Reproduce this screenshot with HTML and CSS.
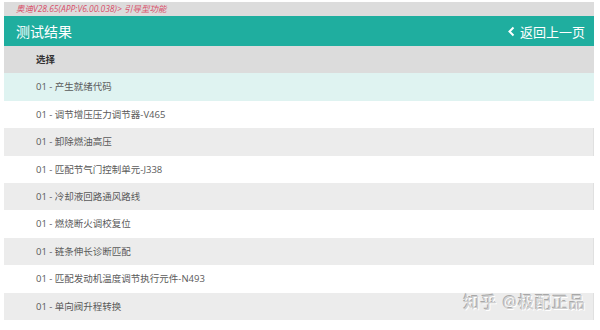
FILE: index.html
```html
<!DOCTYPE html>
<html>
<head>
	<meta charset="utf-8">
	<title>测试结果</title>
	<link rel="stylesheet" href="styles.css">
</head>
<body>
	<main class="pantalla">
		<div class="ruta">奥迪V28.65(APP:V6.00.038)&gt; 引导型功能</div>
		<header class="barra">
			<span class="titulo">测试结果</span>
			<a class="volver" href="#">
				<svg width="9" height="11" viewBox="0 0 9 11"><path d="M6.5 1.5 L2.5 5.5 L6.5 9.5" fill="none" stroke="#fff" stroke-width="2"/></svg>
				返回上一页
			</a>
		</header>
		<div class="fila cabecera">选择</div>
		<div class="fila activa">01 - 产生就绪代码</div>
		<div class="fila blanca">01 - 调节增压压力调节器-V465</div>
		<div class="fila gris">01 - 卸除燃油高压</div>
		<div class="fila blanca">01 - 匹配节气门控制单元-J338</div>
		<div class="fila gris">01 - 冷却液回路通风路线</div>
		<div class="fila blanca">01 - 燃烧断火调校复位</div>
		<div class="fila gris">01 - 链条伸长诊断匹配</div>
		<div class="fila blanca">01 - 匹配发动机温度调节执行元件-N493</div>
		<div class="fila gris">01 - 单向阀升程转换</div>
		<div class="marca">知乎 @极配正品</div>
	</main>
</body>
</html>
```
FILE: styles.css
```css
body {
	margin: 0;
	background-color: #fff;
	font-family: "Open Sans", "Noto Sans CJK SC", sans-serif;
}
.pantalla {
	width: 590px;
	margin: 2px 0 0 4px;
	position: relative;
}
.ruta {
	height: 14px;
	line-height: 14px;
	background-color: #dcdcdc;
	color: #d9506a;
	font-size: 8.5px;
	font-style: italic;
	padding-left: 12px;
}
.barra {
	height: 30px;
	background-color: #1fae9f;
	display: flex;
	align-items: center;
	justify-content: space-between;
	padding: 0 9px 0 12px;
	color: #fff;
}
.titulo {
	font-size: 14px;
}
.volver {
	color: #fff;
	text-decoration: none;
	font-size: 13px;
	display: flex;
	align-items: center;
	gap: 4px;
}
.fila {
	height: 27.4px;
	line-height: 27.4px;
	padding-left: 32px;
	font-size: 9.5px;
	color: #5a5a5a;
	box-sizing: border-box;
}
.cabecera {
	background-color: #dcdcdc;
	color: #333;
	font-weight: bold;
}
.activa {
	background-color: #dff3f1;
}
.blanca {
	background-color: #fff;
}
.gris {
	background-color: #ececec;
	border-right: 1px solid #e0e0e0;
}
.marca {
	position: absolute;
	right: 8px;
	top: 287px;
	font-size: 16px;
	color: #cfcfcf;
	text-shadow: 1px 1px 0 #fff, -1px -1px 0 #a8a8a8;
	letter-spacing: 1px;
}
```
